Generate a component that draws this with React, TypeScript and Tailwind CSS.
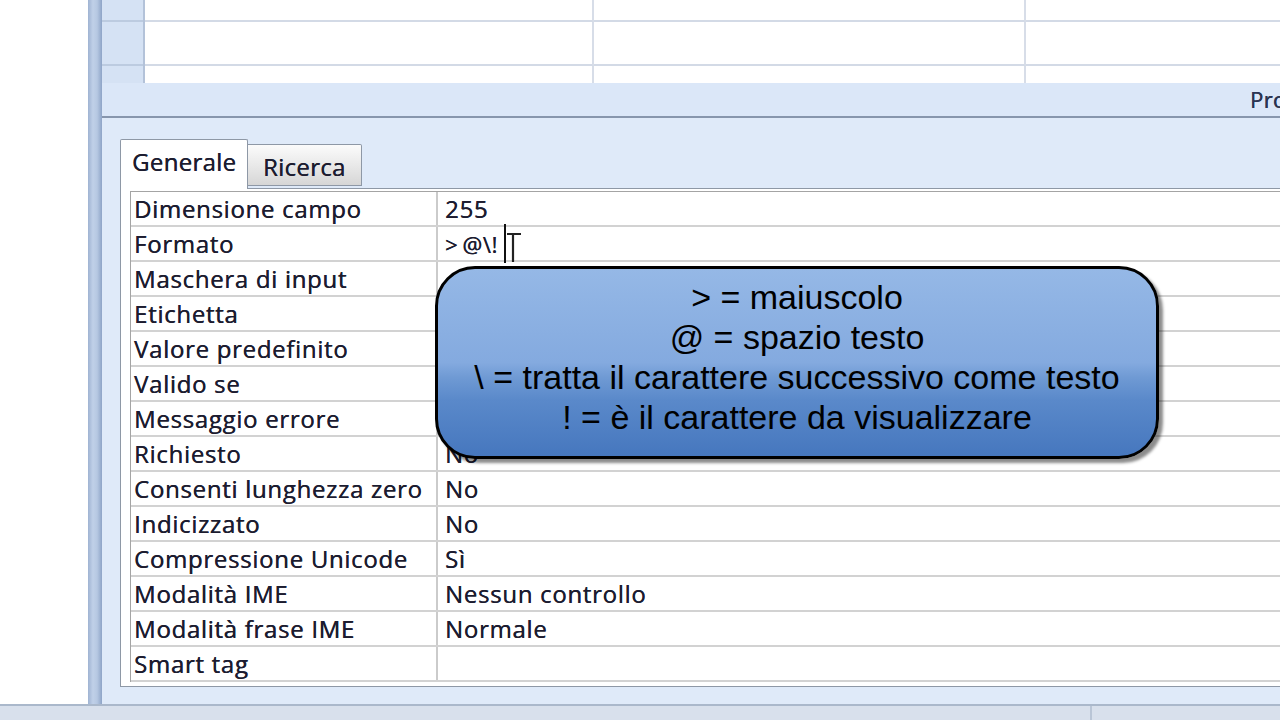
import type { ReactNode } from "react";

const rows: { label: string; value?: ReactNode }[] = [
  { label: "Dimensione campo", value: "255" },
  { label: "Formato", value: "fmt" },
  { label: "Maschera di input" },
  { label: "Etichetta" },
  { label: "Valore predefinito" },
  { label: "Valido se" },
  { label: "Messaggio errore" },
  { label: "Richiesto", value: "No" },
  { label: "Consenti lunghezza zero", value: "No" },
  { label: "Indicizzato", value: "No" },
  { label: "Compressione Unicode", value: "Sì" },
  { label: "Modalità IME", value: "Nessun controllo" },
  { label: "Modalità frase IME", value: "Normale" },
  { label: "Smart tag" },
];

function Caret() {
  return (
    <svg width="22" height="40" viewBox="0 0 22 40" className="ml-[5px] -mt-[3px]">
      <rect x="1" y="0" width="2" height="39" fill="#111" />
      <path d="M4 10h14M10 10v28" stroke="#222" strokeWidth="2.2" fill="none" />
    </svg>
  );
}

function Datasheet() {
  return (
    <div className="h-[83px] flex shrink-0">
      <div className="w-[43px] bg-[#d5e2f4] border-r-2 border-[#b3c2d9] flex flex-col">
        <div className="h-[22px] border-b-2 border-[#bccbe0]" />
        <div className="h-[44px] border-b-2 border-[#bccbe0]" />
        <div className="flex-1" />
      </div>
      <div className="flex-1 bg-white flex flex-col">
        {[22, 44, 17].map((h, i) => (
          <div key={i} className="flex" style={{ height: h }}>
            <div className={`w-[449px] border-r-2 border-[#d7dde8] ${i < 2 ? "border-b-2 border-b-[#d3dae6]" : ""}`} />
            <div className={`w-[432px] border-r-2 border-[#d7dde8] ${i < 2 ? "border-b-2 border-b-[#d3dae6]" : ""}`} />
            <div className={`flex-1 ${i < 2 ? "border-b-2 border-[#d3dae6]" : ""}`} />
          </div>
        ))}
      </div>
    </div>
  );
}

export default function App() {
  return (
    <div
      className="w-[1280px] h-[720px] overflow-hidden relative bg-white flex flex-col text-[#1c1c30] [text-shadow:0.35px_0_0_#1c1c30]"
      style={{ fontFamily: '"Open Sans", "Noto Sans", sans-serif' }}
    >
      <div className="h-[704px] flex shrink-0">
        <div className="w-[88px] bg-white" />
        <div className="w-[14px] bg-[linear-gradient(to_right,#9fb3d2,#c0d0e8_35%,#b6c8e2_65%,#8ea4c7)]" />
        <div className="flex-1 flex flex-col overflow-hidden">
          <Datasheet />
          <div className="h-[35px] shrink-0 bg-[#dbe7f8] border-b-2 border-[#8796ad] pl-[1148px] flex items-center whitespace-nowrap overflow-hidden">
            <span className="text-[22px] text-[#2b3655] tracking-[0.3px]">Proprietà campo</span>
          </div>
          <div className="flex-1 bg-[#dfeaf9] pl-[18px] pt-[21px] pb-[17px] flex flex-col">
            <div className="flex items-start h-[50px] relative z-10">
              <div className="w-[128px] h-[50px] bg-white border border-b-0 border-[#8e98a6] rounded-t-[2px] pl-[11px] pt-[4px] text-[24px] tracking-[0.3px] leading-[36px]">
                Generale
              </div>
              <div className="w-[114px] h-[42px] mt-[5px] bg-[linear-gradient(to_bottom,#fbfbfb,#e9e9e9_50%,#d6d6d6)] border border-l-0 border-[#8e98a6] rounded-tr-[2px] pl-[15px] pt-[4px] text-[24px] tracking-[0.3px] leading-[36px]">
                Ricerca
              </div>
            </div>
            <div className="flex-1 -mt-[1px] bg-white border border-r-0 border-[#8e98a6] pl-[9px] pt-[2px]">
              <div className="border-t border-l border-[#a4a4a4]">
                {rows.map((r) => (
                  <div key={r.label} className="h-[35px] flex border-b-2 border-[#d2d2d2] text-[24px] tracking-[0.7px] leading-[34px] whitespace-nowrap">
                    <div className="w-[307px] shrink-0 border-r-2 border-[#cbcbcb] pl-[3px]">{r.label}</div>
                    <div className="flex-1 pl-[7px] flex items-start">
                      {r.value === "fmt" ? (
                        <>
                          <span className="text-[22px]">&gt;</span>
                          <span className="text-[22px] ml-[4px]">@\!</span>
                          <Caret />
                        </>
                      ) : (
                        r.value
                      )}
                    </div>
                  </div>
                ))}
              </div>
            </div>
          </div>
        </div>
      </div>
      <div className="flex-1 bg-[#d8e0ec] border-t-2 border-[#aab8cb] flex">
        <div className="w-[1092px] border-r-2 border-[#b9c5d6]" />
        <div className="flex-1" />
      </div>

      <div
        className="absolute left-[435px] top-[266px] w-[724px] h-[193px] border-[3px] border-black rounded-[40px] shadow-[4px_4px_3px_rgba(0,0,0,0.45)] bg-[linear-gradient(to_bottom,#95b8e6_0%,#84aadf_50%,#6f9ad4_58%,#5a89ca_70%,#4677be_100%)] flex flex-col items-center justify-center text-[34px] leading-[40px] text-black pb-[12px] [text-shadow:none]"
        style={{ fontFamily: '"Liberation Sans", Arial, sans-serif' }}
      >
        <div>&gt; = maiuscolo</div>
        <div>@ = spazio testo</div>
        <div>\ = tratta il carattere successivo come testo</div>
        <div>! = è il carattere da visualizzare</div>
      </div>
    </div>
  );
}
